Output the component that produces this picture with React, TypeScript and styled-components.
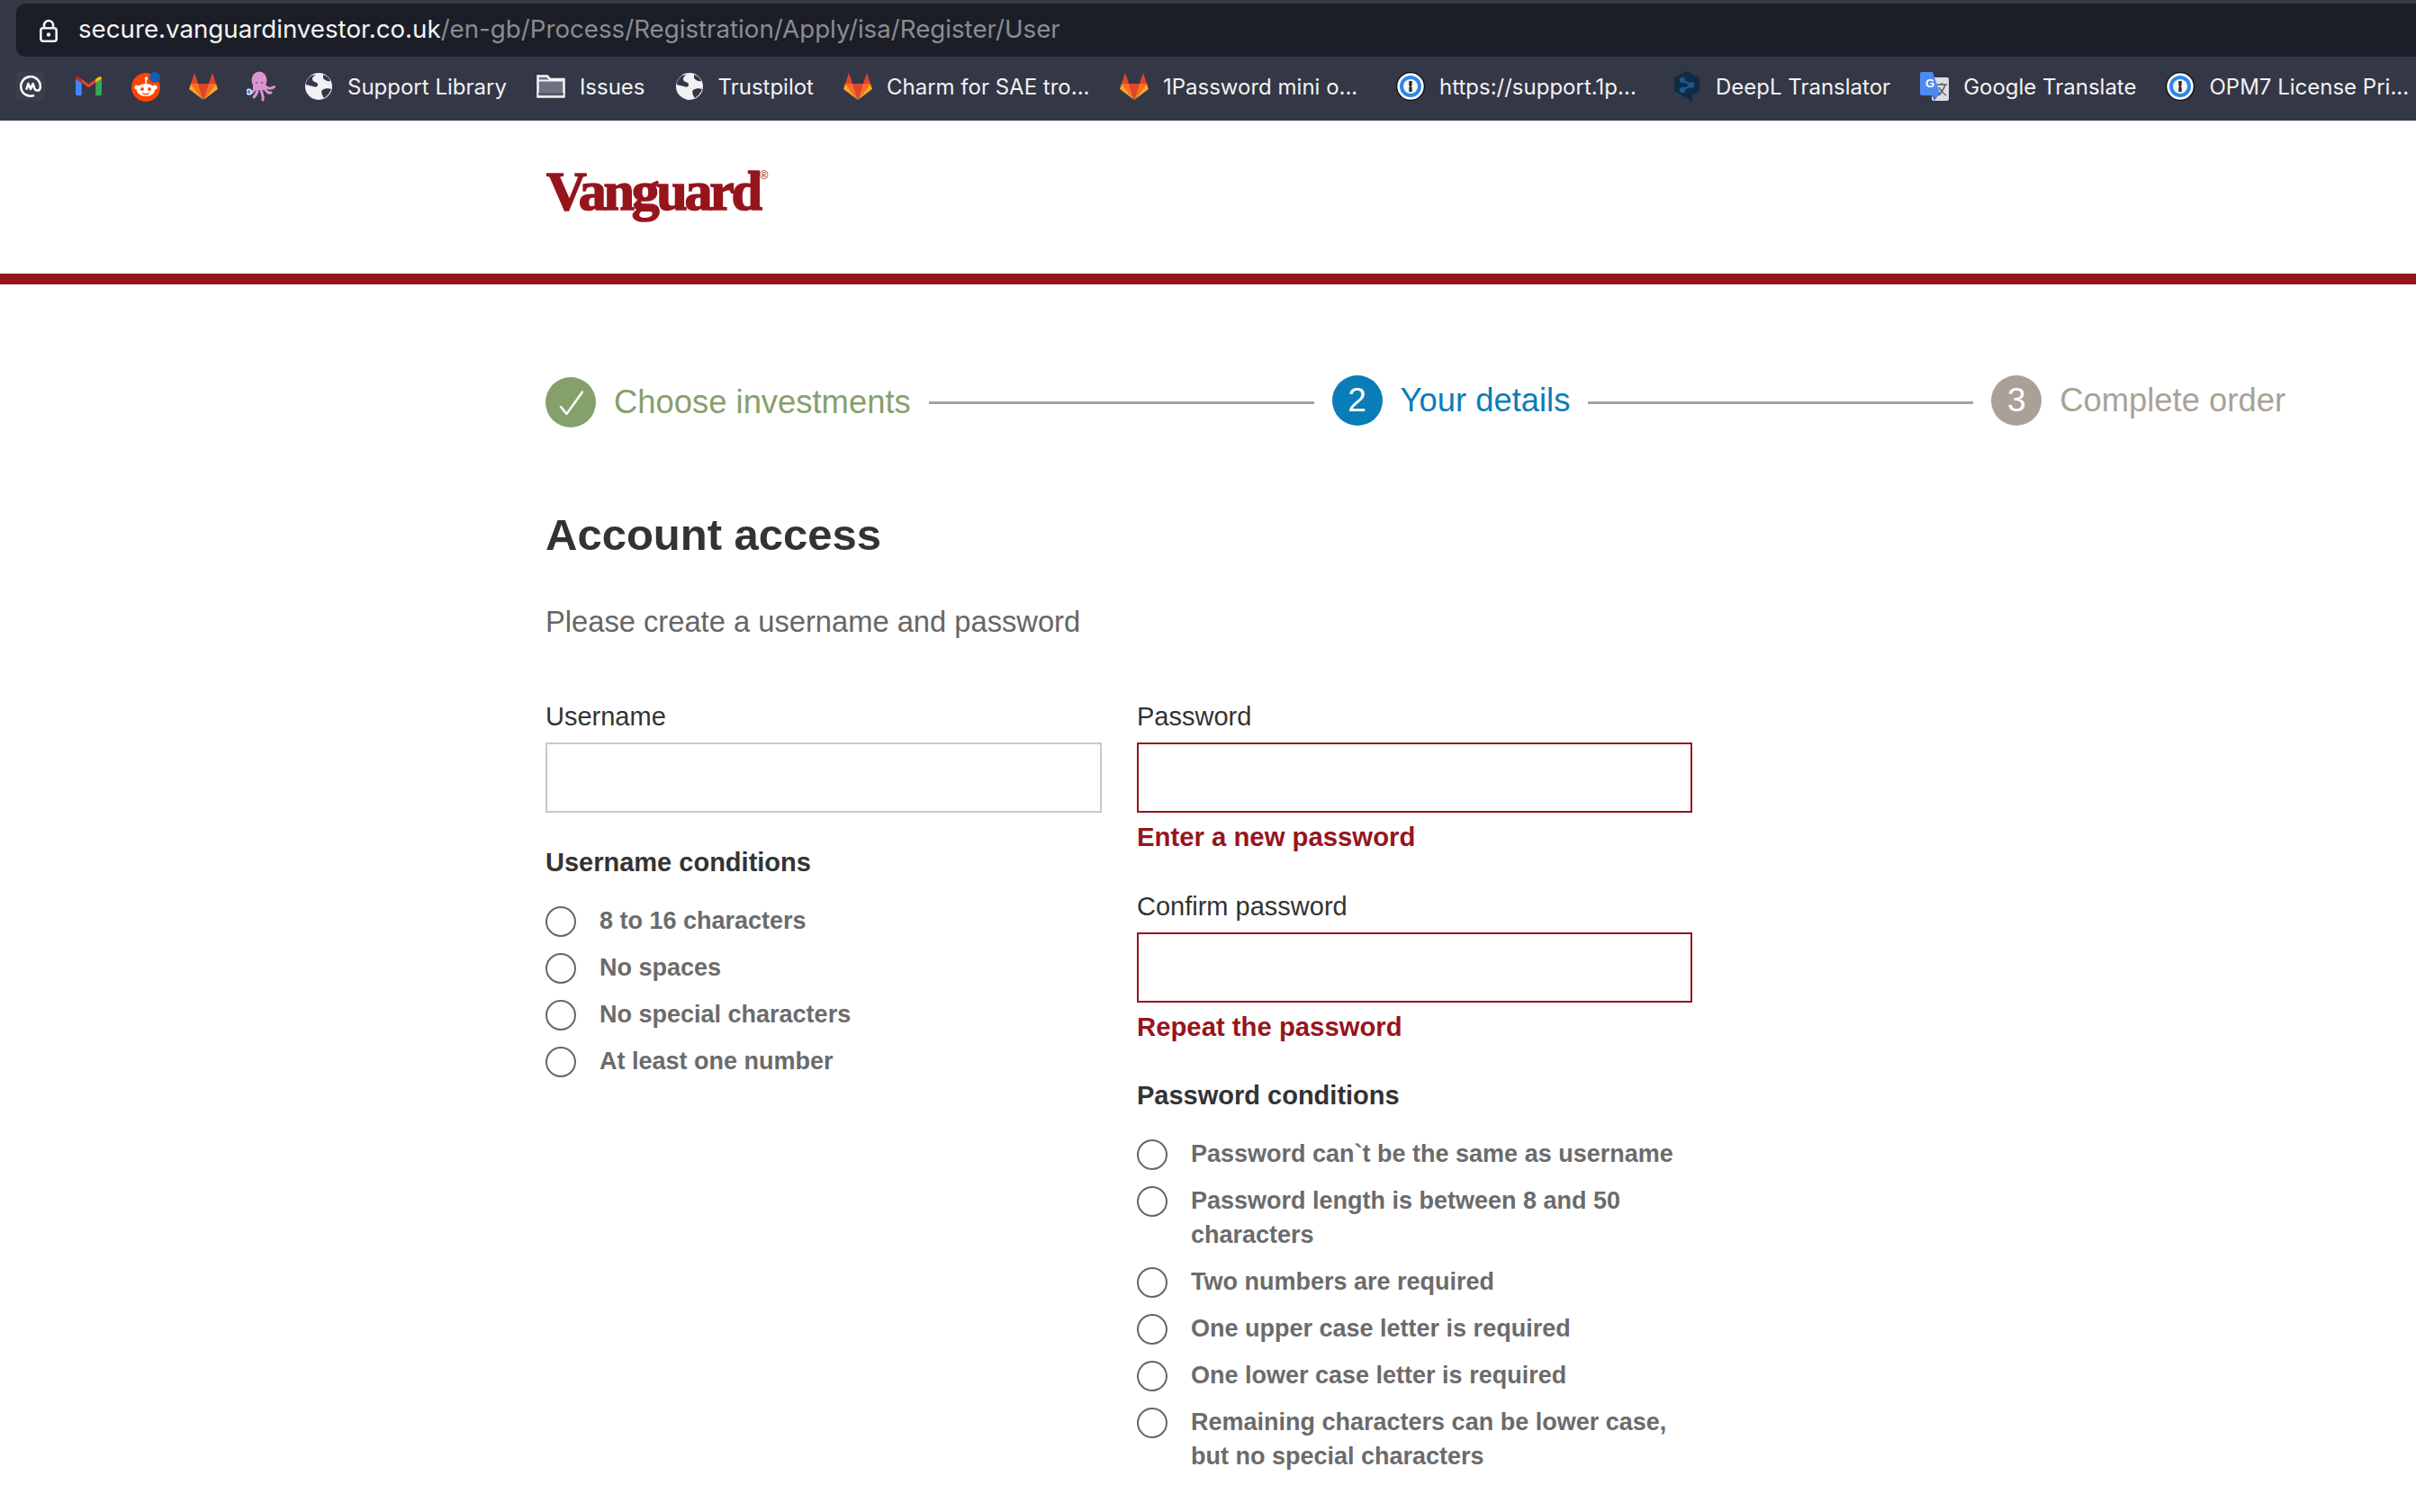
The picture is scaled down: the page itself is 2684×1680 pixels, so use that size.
import { FC, ReactNode } from "react";
import styled, { createGlobalStyle } from "styled-components";

const GlobalStyle = createGlobalStyle`
  html, body {
    margin: 0;
    padding: 0;
    background: #fff;
  }
  body {
    font-family: "Liberation Sans", Arial, sans-serif;
  }
`;

const GitlabIcon: FC = () => (
  <svg width="32" height="30" viewBox="0 0 32 30">
    <path d="M16 30 L10.2 12 H21.8 Z" fill="#e24329" />
    <path d="M16 30 L10.2 12 H2 Z M16 30 L21.8 12 H30 Z" fill="#fc6d26" />
    <path d="M2 12 L0 18 L16 30 Z M30 12 L32 18 L16 30 Z" fill="#fca326" />
    <path d="M2 12 H10.2 L6 0 Z M30 12 H21.8 L26 0 Z" fill="#e24329" />
  </svg>
);

const GlobeIcon: FC = () => (
  <svg width="30" height="30" viewBox="0 0 30 30">
    <circle cx="15" cy="15" r="15" fill="#f1f1f3" />
    <path
      d="M12 2 C8 4 7 7 9 9 C11 11 14 10 14 13 C14 16 11 16 9 15 C6 14 3 14 1 13 L1 11 C3 5 7 2 12 2 Z M19 19 C22 17 26 17 29 18 C27 23 24 26 21 28 C19 25 17 21 19 19 Z M20 2 C24 3 27 6 28 9 C25 10 22 8 20 6 Z"
      fill="#343746"
    />
  </svg>
);

const FolderIcon: FC = () => (
  <svg width="32" height="26" viewBox="0 0 32 26">
    <path
      d="M1.5 24.5 V1.5 H12 L15 5 H30.5 V24.5 Z"
      fill="#6f7280"
      stroke="#f5f5f5"
      strokeWidth="2.5"
    />
    <path d="M2 6.5 H30" stroke="#f5f5f5" strokeWidth="2" />
    <path d="M2 21.5 H30" stroke="#4d505c" strokeWidth="2" />
  </svg>
);

const OnePasswordIcon: FC = () => (
  <svg width="32" height="32" viewBox="0 0 32 32">
    <circle cx="16" cy="16" r="16" fill="#0c0c0e" />
    <circle cx="16" cy="16" r="14.7" fill="#fff" />
    <circle cx="16" cy="16" r="12" fill="#2c86ea" />
    <circle cx="16" cy="16" r="8" fill="#f6f6f6" />
    <path d="M14.3 10 H17.7 V14.5 L16.8 16 L17.7 17.5 V22 H14.3 V17 L15.2 16 L14.3 15 Z" fill="#2a2a2a" />
  </svg>
);

const DeepLIcon: FC = () => (
  <svg width="30" height="34" viewBox="0 0 30 34">
    <path d="M15 0 L29 7.5 V22 L21 26.5 V34 L13 29 L1 22 V7.5 Z" fill="#0f2b46" />
    <g stroke="#1c5a8a" strokeWidth="2.4" fill="#1c5a8a">
      <path d="M10 10 L20 15.5 L10 21" fill="none" />
      <circle cx="10" cy="10" r="2" />
      <circle cx="20" cy="15.5" r="2" />
      <circle cx="10" cy="21" r="2" />
    </g>
  </svg>
);

const GoogleTranslateIcon: FC = () => (
  <svg width="32" height="32" viewBox="0 0 32 32">
    <rect x="13" y="6" width="19" height="26" rx="2" fill="#dcdde0" />
    <path d="M16 32 L13 26 H20 Z" fill="#4a76d4" />
    <path d="M2 0 H14 L23 26 H2 Q0 26 0 24 V2 Q0 0 2 0 Z" fill="#4d8af0" />
    <text x="6" y="17" fontSize="13" fontWeight="700" fontFamily="Liberation Sans" fill="#fff">
      G
    </text>
    <path
      d="M19 14 H30 M24.5 12 V14 M28 14 C26 20 23 24 20 26 M21 17 C23 21 26 24 29 26"
      stroke="#55585f"
      strokeWidth="1.5"
      fill="none"
    />
  </svg>
);

const WorkplaceIcon: FC = () => (
  <WorkplaceTile>
    <svg width="24" height="24" viewBox="0 0 24 24">
      <path
        d="M15 22.3 A10.8 10.8 0 1 1 22.8 12 C22.8 15 21.4 16.6 19.3 16.6 C17.8 16.6 16.8 15.6 16.3 14.2 L14.6 9 L12 15 L9.4 9 L7.6 14.6"
        fill="none"
        stroke="#fff"
        strokeWidth="2.5"
        strokeLinecap="round"
        strokeLinejoin="round"
      />
    </svg>
  </WorkplaceTile>
);

const GmailIcon: FC = () => (
  <svg width="29" height="22" viewBox="0 0 30 26" preserveAspectRatio="none">
    <path d="M0 3 L7 8 V25 H2 Q0 25 0 23 Z" fill="#4285f4" />
    <path d="M30 3 L23 8 V25 H28 Q30 25 30 23 Z" fill="#34a853" />
    <path d="M0 3 Q0 -1 4 1 L15 10 L26 1 Q30 -1 30 3 L23 8 L15 14.5 L7 8 Z" fill="#ea4335" />
    <path d="M0 3 Q0 -1 4 1 L7 3.5 V8 Z" fill="#c5221f" />
    <path d="M30 3 Q30 -1 26 1 L23 3.5 V8 Z" fill="#fbbc04" />
  </svg>
);

const RedditIcon: FC = () => (
  <svg width="32" height="34" viewBox="0 0 32 34">
    <circle cx="16" cy="18" r="16" fill="#ff4500" />
    <ellipse cx="16" cy="21" rx="10" ry="7" fill="#fff" />
    <circle cx="6" cy="18" r="2.6" fill="#fff" />
    <circle cx="26" cy="18" r="2.6" fill="#fff" />
    <circle cx="12" cy="20" r="1.9" fill="#ff4500" />
    <circle cx="20" cy="20" r="1.9" fill="#ff4500" />
    <path d="M12 24.5 Q16 27 20 24.5" stroke="#ff4500" strokeWidth="1.3" fill="none" />
    <path d="M16 14 L16.5 8" stroke="#fff" strokeWidth="1.5" />
    <circle cx="16.5" cy="8" r="1.8" fill="#fff" />
    <circle cx="26" cy="7" r="6" fill="#1560ad" />
  </svg>
);

const OctopusIcon: FC = () => (
  <svg width="32" height="34" viewBox="0 0 32 34">
    <ellipse cx="14" cy="10" rx="8.5" ry="9.5" fill="#d895cf" />
    <path d="M7 15 H21 L22 21 H7 Z" fill="#d895cf" />
    <g fill="none" stroke="#d895cf" strokeWidth="3" strokeLinecap="round">
      <path d="M9 20 C7 24 5 25 2 25" />
      <path d="M12 21 C12 25 10 27 8 29" />
      <path d="M16 21 C17 25 19 28 18 32" />
      <path d="M20 19 C22 23 24 25 27 24" />
      <path d="M21 17 C24 20 27 20 30.5 17.5" />
    </g>
    <circle cx="11" cy="13" r="0.9" fill="#6b3f68" />
    <circle cx="17" cy="13" r="0.9" fill="#6b3f68" />
    <circle cx="2.5" cy="23" r="3.5" fill="#dfe9fb" />
    <circle cx="2.5" cy="23" r="2" fill="#4d8af0" />
  </svg>
);

const BOOKMARKS: { icon: ReactNode; label?: string }[] = [
  { icon: <WorkplaceIcon /> },
  { icon: <GmailIcon /> },
  { icon: <RedditIcon /> },
  { icon: <GitlabIcon /> },
  { icon: <OctopusIcon /> },
  { icon: <GlobeIcon />, label: "Support Library" },
  { icon: <FolderIcon />, label: "Issues" },
  { icon: <GlobeIcon />, label: "Trustpilot" },
  { icon: <GitlabIcon />, label: "Charm for SAE tro..." },
  { icon: <GitlabIcon />, label: "1Password mini o..." },
  { icon: <OnePasswordIcon />, label: "https://support.1p..." },
  { icon: <DeepLIcon />, label: "DeepL Translator" },
  { icon: <GoogleTranslateIcon />, label: "Google Translate" },
  { icon: <OnePasswordIcon />, label: "OPM7 License Pri..." },
];

const USERNAME_CONDITIONS = [
  "8 to 16 characters",
  "No spaces",
  "No special characters",
  "At least one number",
];

const PASSWORD_CONDITIONS = [
  "Password can`t be the same as username",
  "Password length is between 8 and 50 characters",
  "Two numbers are required",
  "One upper case letter is required",
  "One lower case letter is required",
  "Remaining characters can be lower case, but no special characters",
];

const Conditions: FC<{ title: string; items: string[] }> = ({ title, items }) => (
  <ConditionBlock>
    <ConditionTitle>{title}</ConditionTitle>
    <ConditionList>
      {items.map((item) => (
        <ConditionItem key={item}>
          <Radio />
          <span>{item}</span>
        </ConditionItem>
      ))}
    </ConditionList>
  </ConditionBlock>
);

const App: FC = () => {
  return (
    <Page>
      <GlobalStyle />
      <BrowserChrome>
        <AddressBar>
          <svg width="20" height="26" viewBox="0 0 20 26">
            <path d="M5 11 V7 a5 5 0 0 1 10 0 V11" fill="none" stroke="#f2f2f2" strokeWidth="2.6" />
            <rect x="1.3" y="10.3" width="17.4" height="14.4" rx="2.5" fill="none" stroke="#f2f2f2" strokeWidth="2.6" />
            <circle cx="10" cy="17.5" r="2.2" fill="#f2f2f2" />
          </svg>
          <Url>
            secure.vanguardinvestor.co.uk
            <UrlPath>/en-gb/Process/Registration/Apply/isa/Register/User</UrlPath>
          </Url>
        </AddressBar>
        <BookmarkBar>
          {BOOKMARKS.map((b, i) => (
            <Bookmark key={i}>
              <BookmarkIcon>{b.icon}</BookmarkIcon>
              {b.label && (
                <BookmarkLabel $truncated={b.label.endsWith("...")}>{b.label}</BookmarkLabel>
              )}
            </Bookmark>
          ))}
        </BookmarkBar>
      </BrowserChrome>

      <Header>
        <Logo>
          Vanguard<LogoMark>®</LogoMark>
        </Logo>
      </Header>

      <Content>
        <Steps>
          <Step $color="#86a06b">
            <StepCircle $color="#86a06b">
              <svg width="28" height="28" viewBox="0 0 28 28">
                <path
                  d="M3 19 L9.5 27 L27 2.5"
                  fill="none"
                  stroke="#fff"
                  strokeWidth="2.4"
                  strokeLinecap="round"
                  strokeLinejoin="round"
                />
              </svg>
            </StepCircle>
            Choose investments
          </Step>
          <StepLine />
          <Step $color="#0a7db8" $raised>
            <StepCircle $color="#0a7db8">2</StepCircle>
            Your details
          </Step>
          <StepLine />
          <Step $color="#aaa196" $raised>
            <StepCircle $color="#aaa196">3</StepCircle>
            Complete order
          </Step>
        </Steps>

        <Title>Account access</Title>
        <Intro>Please create a username and password</Intro>

        <FormGrid>
          <Column>
            <Field>
              <FieldLabel>Username</FieldLabel>
              <TextInput />
            </Field>
            <Conditions title="Username conditions" items={USERNAME_CONDITIONS} />
          </Column>
          <Column>
            <Field>
              <FieldLabel>Password</FieldLabel>
              <TextInput $error />
              <FieldError>Enter a new password</FieldError>
            </Field>
            <Field>
              <FieldLabel>Confirm password</FieldLabel>
              <TextInput $error />
              <FieldError>Repeat the password</FieldError>
            </Field>
            <Conditions title="Password conditions" items={PASSWORD_CONDITIONS} />
          </Column>
        </FormGrid>
      </Content>
    </Page>
  );
};

export default App;

const Page = styled.div`
  width: 2684px;
  height: 1680px;
  overflow: hidden;
  background: #fff;
`;

const BrowserChrome = styled.div`
  background: #343746;
  height: 134px;
  padding-top: 4px;
  box-sizing: border-box;
`;

const AddressBar = styled.div`
  display: flex;
  align-items: center;
  gap: 23px;
  height: 59px;
  margin-left: 18px;
  padding-left: 26px;
  background: #1b1e27;
  border-radius: 10px 0 0 10px;
`;

const Url = styled.div`
  padding-bottom: 3px;
  font-family: Inter, sans-serif;
  font-size: 27.7px;
  color: #f4f4f5;
  white-space: nowrap;
`;

const UrlPath = styled.span`
  color: #8b8c90;
`;

const BookmarkBar = styled.div`
  display: flex;
  align-items: center;
  gap: 32px;
  height: 62px;
  margin-top: 2px;
  padding-left: 18px;
  overflow: hidden;
`;

const Bookmark = styled.div`
  display: flex;
  align-items: center;
  gap: 16px;
  flex: none;
  font-family: Inter, sans-serif;
  font-size: 24px;
  color: #f2f2f4;
  white-space: nowrap;
`;

const BookmarkIcon = styled.div`
  display: flex;
  align-items: center;
  justify-content: center;
  width: 32px;
  height: 34px;
  flex: none;
`;

const BookmarkLabel = styled.span<{ $truncated?: boolean }>`
  display: block;
  width: ${(p) => (p.$truncated ? "226px" : "auto")};
  margin-right: 1px;
`;

const WorkplaceTile = styled.div`
  display: flex;
  align-items: center;
  justify-content: center;
  width: 32px;
  height: 32px;
  border-radius: 5px;
  background: #3a3f4d;
`;

const Header = styled.header`
  height: 182px;
  padding-left: 607px;
  box-sizing: border-box;
  border-bottom: 12px solid #96151d;
`;

const Logo = styled.div`
  display: inline-block;
  margin-top: 43px;
  font-family: "Liberation Serif", serif;
  font-size: 62px;
  font-weight: 700;
  line-height: 70px;
  letter-spacing: -3.3px;
  color: #96151d;
  -webkit-text-stroke: 1.6px #96151d;
`;

const LogoMark = styled.sup`
  font-family: "Liberation Sans", sans-serif;
  font-size: 13px;
  font-weight: 400;
  letter-spacing: 0;
  line-height: 0;
  vertical-align: 34px;
  -webkit-text-stroke: 0;
`;

const Content = styled.main`
  padding: 101px 0 0 606px;
`;

const Steps = styled.div`
  display: flex;
  align-items: center;
  width: 1933px;
  height: 60px;
  gap: 20px;
`;

const Step = styled.div<{ $color: string; $raised?: boolean }>`
  display: flex;
  align-items: center;
  gap: 20px;
  flex: none;
  font-size: 36.4px;
  color: ${(p) => p.$color};
  white-space: nowrap;
  padding-bottom: ${(p) => (p.$raised ? 4 : 0)}px;
`;

const StepCircle = styled.div<{ $color: string }>`
  display: flex;
  align-items: center;
  justify-content: center;
  width: 56px;
  height: 56px;
  border-radius: 50%;
  background: ${(p) => p.$color};
  color: #fff;
  font-size: 37px;
`;

const StepLine = styled.div`
  flex: 1;
  height: 3px;
  background: #aaa196;
`;

const Title = styled.h1`
  margin: 87px 0 0;
  font-size: 49px;
  line-height: 60px;
  font-weight: 700;
  color: #333;
`;

const Intro = styled.p`
  margin: 46px 0 0;
  font-size: 32.7px;
  line-height: 42px;
  color: #666;
`;

const FormGrid = styled.div`
  display: grid;
  grid-template-columns: 618px 617px;
  column-gap: 39px;
  margin-top: 66px;
`;

const Column = styled.div`
  display: flex;
  flex-direction: column;
`;

const Field = styled.div`
  margin-bottom: 37px;

  & + & {
    margin-top: 4px;
    margin-bottom: 40px;
  }
`;

const FieldLabel = styled.label`
  display: block;
  font-size: 29px;
  line-height: 36px;
  color: #333;
  margin-bottom: 11px;
`;

const TextInput = styled.div<{ $error?: boolean }>`
  height: 78px;
  box-sizing: border-box;
  border: 2px solid ${(p) => (p.$error ? "#96151d" : "#c8c8c8")};
  background: #fff;
`;

const FieldError = styled.div`
  margin-top: 9px;
  font-size: 29.3px;
  line-height: 36px;
  font-weight: 700;
  color: #96151d;
`;

const ConditionBlock = styled.div``;

const ConditionTitle = styled.h3`
  margin: 0 0 28px;
  font-size: 29px;
  line-height: 36px;
  font-weight: 700;
  color: #333;
`;

const ConditionList = styled.ul`
  list-style: none;
  margin: 0;
  padding: 0;
  display: flex;
  flex-direction: column;
  gap: 14px;
`;

const ConditionItem = styled.li`
  display: flex;
  gap: 26px;
  font-size: 27px;
  line-height: 38px;
  font-weight: 700;
  color: #6b6b6b;
`;

const Radio = styled.span`
  flex: none;
  width: 34px;
  height: 34px;
  margin-top: 3px;
  box-sizing: border-box;
  border: 2px solid #666;
  border-radius: 50%;
`;
